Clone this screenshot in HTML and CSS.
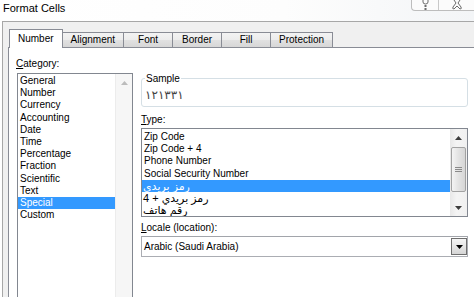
FILE: index.html
```html
<!DOCTYPE html>
<html lang="en">
<head>
    <meta charset="UTF-8">
    <title>Format Cells</title>
    <link rel="stylesheet" href="styles.css">
</head>
<body>
    <div class="titlebar">
        <span class="title">Format Cells</span>
        <div class="caption-btns">
            <span class="cap-btn">
                <svg width="9" height="10" viewBox="0 0 9 10">
                    <path d="M2 0 L2 2 Q2 4 4.5 4 Q7 4 7 2 L7 0" fill="none" stroke="#6b6b6b" stroke-width="1"/>
                    <rect x="3.5" y="5" width="2" height="2" fill="#6b6b6b"/>
                    <rect x="3.5" y="8" width="2" height="2" fill="#6b6b6b"/>
                </svg>
            </span>
            <span class="cap-btn close">
                <svg width="12" height="10" viewBox="0 0 12 10">
                    <path d="M3 0 L5 3 L2 7 Q1 9 3 9 L6 6 L9 9 Q11 9 10 7 L7 3 L9 0" fill="none" stroke="#6b6b6b" stroke-width="1"/>
                </svg>
            </span>
        </div>
    </div>

    <div class="dialog">
        <div class="tabs">
            <div class="tab active">Number</div>
            <div class="tab">Alignment</div>
            <div class="tab">Font</div>
            <div class="tab">Border</div>
            <div class="tab">Fill</div>
            <div class="tab">Protection</div>
        </div>

        <div class="panel">
            <div class="cat-col">
                <div class="label cat-label"><u>C</u>ategory:</div>
                <div class="listbox cat-list">
                    <div class="items">
                        <div class="item">General</div>
                        <div class="item">Number</div>
                        <div class="item">Currency</div>
                        <div class="item">Accounting</div>
                        <div class="item">Date</div>
                        <div class="item">Time</div>
                        <div class="item">Percentage</div>
                        <div class="item">Fraction</div>
                        <div class="item">Scientific</div>
                        <div class="item">Text</div>
                        <div class="item selected">Special</div>
                        <div class="item">Custom</div>
                    </div>
                    <div class="vscroll disabled">
                        <div class="sb-btn">
                            <svg width="7" height="4" viewBox="0 0 7 4"><path d="M0 4 L3.5 0 L7 4 Z" fill="#bcbcbc"/></svg>
                        </div>
                    </div>
                </div>
            </div>

            <div class="main-col">
                <fieldset class="sample">
                    <legend>Sample</legend>
                    <div class="sample-value">١٢١٣٣١</div>
                </fieldset>

                <div class="label type-label"><u>T</u>ype:</div>
                <div class="listbox type-list">
                    <div class="items">
                        <div class="item">Zip Code</div>
                        <div class="item">Zip Code + 4</div>
                        <div class="item">Phone Number</div>
                        <div class="item">Social Security Number</div>
                        <div class="item rtl selected">رمز بريدي</div>
                        <div class="item rtl">رمز بريدي + 4</div>
                        <div class="item rtl">رقم هاتف</div>
                    </div>
                    <div class="vscroll">
                        <div class="sb-btn">
                            <svg width="7" height="4" viewBox="0 0 7 4"><path d="M0 4 L3.5 0 L7 4 Z" fill="#3c3c3c"/></svg>
                        </div>
                        <div class="thumb">
                            <span class="grip"></span>
                            <span class="grip"></span>
                            <span class="grip"></span>
                        </div>
                        <div class="sb-btn down">
                            <svg width="7" height="4" viewBox="0 0 7 4"><path d="M0 0 L3.5 4 L7 0 Z" fill="#3c3c3c"/></svg>
                        </div>
                    </div>
                </div>

                <div class="label locale-label"><u>L</u>ocale (location):</div>
                <div class="combo">
                    <span class="combo-text">Arabic (Saudi Arabia)</span>
                    <span class="drop">
                        <svg width="7" height="4" viewBox="0 0 7 4"><path d="M0 0 L3.5 4 L7 0 Z" fill="#000"/></svg>
                    </span>
                </div>
            </div>
        </div>
    </div>
</body>
</html>
```

FILE: styles.css
```css
/* Format Cells dialog, Windows 7 look */
body {
    margin: 0;
    width: 474px;
    height: 297px;
    overflow: hidden;
    background: #fff;
    color: #000;
    font-family: "Liberation Sans", "DejaVu Sans", sans-serif;
    font-size: 10px;
}

/* title bar */
.titlebar {
    display: flex;
    height: 21px;
    background: linear-gradient(90deg, #fff, #fdfdfd 60%, #f3f5f7);
}

.title {
    font-size: 11px;
    line-height: 16px;
    padding-left: 3px;
}

.caption-btns {
    margin-left: auto;
    display: flex;
    width: 63px;
    height: 11px;
    box-sizing: border-box;
    border: 1px solid #bdbdbd;
    border-top: none;
    border-right: none;
    border-bottom-left-radius: 4px;
    background: #fbfbfb;
    overflow: hidden;
}

.cap-btn {
    width: 26px;
    display: flex;
    justify-content: center;
    align-items: flex-end;
}

.cap-btn.close {
    flex: 1;
    border-left: 1px solid #c8c8c8;
}

/* dialog body */
.dialog {
    margin-left: 2px;
    height: 275px;
    border-top: 1px solid #a7a7a7;
    border-left: 1px solid #a7a7a7;
    background: #f0f0f0;
    padding-left: 5px;
}

.tabs {
    display: flex;
    align-items: flex-end;
    height: 25px;
    padding-left: 1px;
    position: relative;
    z-index: 1;
}

.tab {
    box-sizing: border-box;
    height: 15px;
    min-width: 50px;
    margin-left: -1px;
    padding: 0 8px;
    border: 1px solid #898c95;
    border-bottom: none;
    line-height: 14px;
    text-align: center;
    background: linear-gradient(#f3f3f3, #ececec 50%, #e1e1e1 50%, #d7d7d7);
}

.tab.active {
    margin-left: 0;
    height: 19px;
    margin-bottom: -1px;
    line-height: 17px;
    background: #fff;
    position: relative;
    z-index: 2;
}

.panel {
    display: flex;
    box-sizing: border-box;
    width: 466px;
    height: 250px;
    border: 1px solid #898c95;
    border-right: none;
    border-bottom: none;
    background: #fff;
}

.label {
    line-height: 13px;
    white-space: nowrap;
}

/* category column */
.cat-col {
    padding: 9px 0 0 7px;
}

.cat-label {
    margin-bottom: 3px;
}

.listbox {
    display: flex;
    box-sizing: border-box;
    border: 1px solid #828790;
    background: #fff;
}

.cat-list {
    margin-left: 1px;
    width: 116px;
    height: 224px;
    border-bottom: none;
}

.items {
    flex: 1;
    min-width: 0;
    padding-top: 1px;
    overflow: hidden;
}

.item {
    height: 12.2px;
    line-height: 12.2px;
    padding-left: 2px;
    white-space: nowrap;
}

.item.rtl {
    direction: rtl;
    text-align: left;
    padding-left: 1px;
    font-size: 11px;
}

.item.selected {
    background: #3399ff;
    color: #fff;
}

.vscroll {
    width: 17px;
    display: flex;
    flex-direction: column;
    background: linear-gradient(90deg, #e8e8e8, #f4f4f4 40%, #f0f0f0);
}

.vscroll.disabled {
    background: #f6f6f6;
    border-left: 1px solid #ececec;
    width: 16px;
}

.sb-btn {
    height: 17px;
    flex-shrink: 0;
    display: flex;
    align-items: center;
    justify-content: center;
}

.sb-btn.down {
    margin-top: auto;
}

.thumb {
    box-sizing: border-box;
    height: 45px;
    margin: 1px 1px 0;
    border: 1px solid #a2a2a2;
    border-radius: 2px;
    background: linear-gradient(90deg, #f4f4f4, #e3e3e3 50%, #d6d6d6);
    display: flex;
    flex-direction: column;
    align-items: center;
    justify-content: center;
    gap: 1px;
}

.grip {
    width: 7px;
    height: 1px;
    background: #8a8a8a;
}

/* right column */
.main-col {
    margin-left: 8px;
    padding-top: 24px;
    width: 327px;
}

.sample {
    margin: 0;
    padding: 4px 4px 4px 3px;
    border: 1px solid #d5dfe5;
    border-radius: 3px;
}

.sample legend {
    padding: 0 1px;
    line-height: 13px;
}

.sample-value {
    line-height: 13px;
    font-size: 12px;
    color: #444;
}

.type-label {
    margin-top: 6px;
    margin-bottom: 2px;
}

.type-list {
    height: 89px;
}

.type-list .items {
    padding-top: 2px;
}

.locale-label {
    margin-top: 4px;
    margin-bottom: 2px;
}

.combo {
    box-sizing: border-box;
    height: 21px;
    display: flex;
    align-items: center;
    border: 1px solid #abadb3;
    border-top-color: #a2a5ab;
}

.combo-text {
    padding-left: 2px;
}

.drop {
    box-sizing: border-box;
    margin-left: auto;
    width: 16px;
    height: 17px;
    border: 1px solid #6f6f6f;
    background: linear-gradient(#f5f5f5, #e6e6e6 50%, #d5d5d5);
    display: flex;
    align-items: center;
    justify-content: center;
}
```
